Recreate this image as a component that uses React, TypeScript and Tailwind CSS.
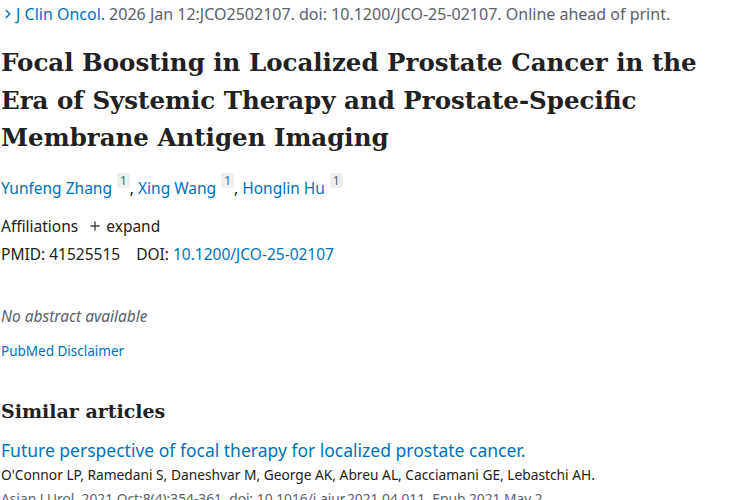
import { ChevronRight, Plus } from "lucide-react"

const sans = "font-['Noto_Sans',sans-serif]"
const serif = "font-['DejaVu_Serif',serif]"

function Author({ name, last }: { name: string; last?: boolean }) {
    return (
        <span>
            <a className="text-[#0071bc]">{name}</a>
            <sup className="ml-[5px] inline-block rounded-[2px] bg-[#eeeeee] px-[3px] text-[12px] leading-[15px] text-[#5b616b] align-[3px]">1</sup>
            {!last && <span className="text-[#212121]">, </span>}
        </span>
    )
}

export default function App() {
    return (
        <div className={`min-h-screen w-[750px] overflow-hidden bg-white text-[#212121] ${sans}`}>
            <main className="pl-[1px]">
                {/* citation line */}
                <div className="flex items-center h-[28px] text-[16px] text-[#5b616b] whitespace-nowrap">
                    <ChevronRight className="w-[14px] h-[14px] text-[#0071bc] mr-[1px]" strokeWidth={2.5} />
                    <a className="text-[#0071bc] mr-[4px]">J Clin Oncol.</a>
                    <span>2026 Jan 12:JCO2502107. doi: 10.1200/JCO-25-02107. Online ahead of print.</span>
                </div>

                {/* title */}
                <h1 className={`${serif} mt-[16px] text-[24.5px] font-bold leading-[37.5px] text-[#212121] whitespace-nowrap`}>
                    Focal Boosting in Localized Prostate Cancer in the
                    <br />
                    Era of Systemic Therapy and Prostate‐Specific
                    <br />
                    Membrane Antigen Imaging
                </h1>

                {/* authors */}
                <div className="mt-[19px] text-[15.5px] leading-[24px]">
                    <Author name="Yunfeng Zhang" />
                    <Author name="Xing Wang" />
                    <Author name="Honglin Hu" last />
                </div>

                <div className="mt-[14px] flex items-center text-[15.5px] leading-[24px]">
                    <span>Affiliations</span>
                    <Plus className="ml-[10px] mr-[4px] w-[14px] h-[14px] text-[#444]" strokeWidth={2.5} />
                    <span>expand</span>
                </div>

                <div className="mt-[4px] text-[15.5px] leading-[24px]">
                    <span>PMID: 41525515</span>
                    <span className="ml-[16px]">DOI: </span>
                    <a className="text-[#0071bc]">10.1200/JCO-25-02107</a>
                </div>

                <p className="mt-[38px] text-[15.5px] italic text-[#5b616b] leading-[24px]">No abstract available</p>

                <a className="block mt-[11px] text-[13.5px] text-[#0071bc] leading-[24px]">PubMed Disclaimer</a>

                <h2 className={`${serif} mt-[36px] text-[19px] font-bold leading-[24px]`}>Similar articles</h2>

                <a className="block mt-[14px] text-[17.5px] text-[#0071bc] leading-[26px] whitespace-nowrap">
                    Future perspective of focal therapy for localized prostate cancer.
                </a>
                <div className="text-[13.75px] leading-[24px] whitespace-nowrap">
                    O'Connor LP, Ramedani S, Daneshvar M, George AK, Abreu AL, Cacciamani GE, Lebastchi AH.
                </div>
                <div className="text-[13.75px] leading-[24px] text-[#5b616b] whitespace-nowrap">
                    Asian J Urol. 2021 Oct;8(4):354-361. doi: 10.1016/j.ajur.2021.04.011. Epub 2021 May 2.
                </div>
            </main>
        </div>
    )
}
